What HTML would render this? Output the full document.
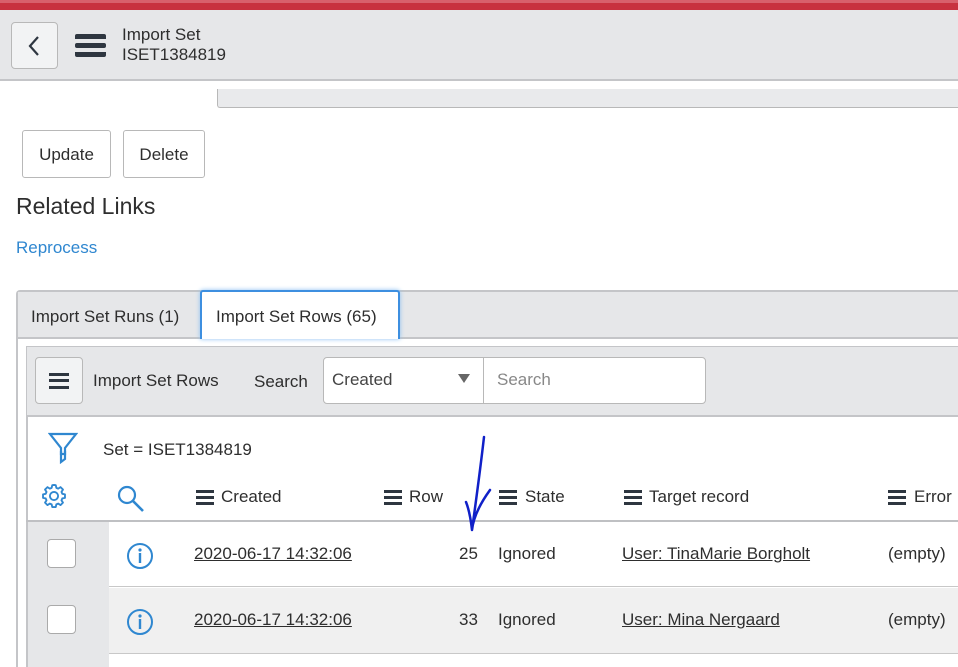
<!DOCTYPE html>
<html><head><style>
*{margin:0;padding:0;box-sizing:border-box}
body{width:958px;height:667px;overflow:hidden;background:#fff;font-family:"Liberation Sans",sans-serif;color:#2e2e2e;position:relative}
.a{position:absolute}
.hb{position:absolute;width:18px;height:15px;border-top:3px solid #2e3640;border-bottom:3px solid #2e3640}
.hb:after{content:"";position:absolute;left:0;right:0;top:3px;height:3px;background:#2e3640}
.btn{position:absolute;border:1px solid #b8b8b8;border-radius:3px;background:#fff;font-size:17px;text-align:center;line-height:47px;color:#2e2e2e}
.th{position:absolute;top:487px;font-size:17px;color:#2e2e2e}
.td{position:absolute;font-size:17px}
.u{text-decoration:underline}
.cb{position:absolute;left:47px;width:29px;height:29px;border:1px solid #aaa;border-radius:4px;background:#fff}
</style></head><body>
<div class="a" style="left:0;top:0;width:958px;height:3px;background:#d8606c"></div>
<div class="a" style="left:0;top:3px;width:958px;height:7px;background:#c8313f"></div>
<div class="a" style="left:0;top:10px;width:958px;height:71px;background:#e6e7e9;border-bottom:2px solid #c4c5c8"></div>
<div class="a" style="left:11px;top:22px;width:47px;height:47px;border:1px solid #b8b8b8;border-radius:4px;background:#f2f3f4"></div>
<svg class="a" style="left:25px;top:34px" width="20" height="24"><path d="M13 3 L5 12 L13 21" fill="none" stroke="#2e3640" stroke-width="2.2"/></svg>
<div class="a" style="left:75px;top:34px;width:31px;height:23px;border-top:5px solid #2e3640;border-bottom:5px solid #2e3640;border-radius:2px"></div>
<div class="a" style="left:75px;top:43px;width:31px;height:5px;background:#2e3640;border-radius:2px"></div>
<div class="a" style="left:122px;top:25px;font-size:17px;color:#2e2e2e">Import Set</div>
<div class="a" style="left:122px;top:45px;font-size:17px;color:#2e2e2e">ISET1384819</div>
<div class="a" style="left:217px;top:89px;width:741px;height:19px;background:#e9eaec;border-left:1px solid #b8b8b8;border-bottom:1px solid #b8b8b8;border-radius:0 0 0 3px"></div>
<div class="btn" style="left:22px;top:130px;width:89px;height:48px">Update</div>
<div class="btn" style="left:123px;top:130px;width:82px;height:48px">Delete</div>
<div class="a" style="left:16px;top:193px;font-size:23px;color:#2e2e2e">Related Links</div>
<div class="a" style="left:16px;top:238px;font-size:17px;color:#2f87d0">Reprocess</div>
<div class="a" style="left:16px;top:290px;width:942px;height:377px;border-left:2px solid #c4c5c8;border-top:2px solid #c4c5c8;border-radius:4px 0 0 0"></div>
<div class="a" style="left:18px;top:292px;width:940px;height:47px;background:#e6e7e9;border-bottom:2px solid #c4c5c8"></div>
<div class="a" style="left:31px;top:307px;font-size:17px">Import Set Runs (1)</div>
<div class="a" style="left:200px;top:290px;width:200px;height:49px;background:#fff;border:2px solid #3d8fe0;border-bottom:none;border-radius:3px 3px 0 0;box-shadow:0 0 5px #8cc0f2"></div>
<div class="a" style="left:216px;top:307px;font-size:17px">Import Set Rows (65)</div>
<div class="a" style="left:26px;top:346px;width:932px;height:71px;background:#e6e7e9;border:1px solid #c4c5c8;border-bottom:2px solid #c4c5c8;border-right:none"></div>
<div class="a" style="left:35px;top:357px;width:48px;height:47px;border:1px solid #b8b8b8;border-radius:4px;background:#f2f3f4"></div>
<div class="a" style="left:49px;top:373px;width:20px;height:16px;border-top:3px solid #2e3640;border-bottom:3px solid #2e3640"></div>
<div class="a" style="left:49px;top:379px;width:20px;height:3px;background:#2e3640"></div>
<div class="a" style="left:93px;top:371px;font-size:17px">Import Set Rows</div>
<div class="a" style="left:254px;top:372px;font-size:17px">Search</div>
<div class="a" style="left:323px;top:357px;width:161px;height:47px;background:#fff;border:1px solid #b8b8b8;border-radius:4px 0 0 4px"></div>
<div class="a" style="left:332px;top:370px;font-size:17px;color:#444">Created</div>
<div class="a" style="left:458px;top:374px;width:0;height:0;border-left:6px solid transparent;border-right:6px solid transparent;border-top:9px solid #666"></div>
<div class="a" style="left:483px;top:357px;width:223px;height:47px;background:#fff;border:1px solid #b8b8b8;border-radius:0 4px 4px 0"></div>
<div class="a" style="left:497px;top:370px;font-size:17px;color:#888">Search</div>
<div class="a" style="left:26px;top:417px;width:932px;height:250px;border-left:2px solid #c4c5c8"></div>
<svg class="a" style="left:48px;top:432px" width="30" height="32"><path d="M2 2 H28 L17 16 V22 H13 V16 Z" fill="none" stroke="#2f87d0" stroke-width="2.2"/><path d="M13 19 V30 L17 27 V19" fill="none" stroke="#2f87d0" stroke-width="2.2"/></svg>
<div class="a" style="left:103px;top:440px;font-size:17px">Set = ISET1384819</div>
<svg class="a" style="left:40px;top:482px" width="28" height="28" viewBox="0 0 24 24"><path d="M12 2.5l1.5.2.5 2.3 1.6.7 2-1.3 2.1 2.1-1.3 2 .7 1.6 2.3.5v3l-2.3.5-.7 1.6 1.3 2-2.1 2.1-2-1.3-1.6.7-.5 2.3h-3l-.5-2.3-1.6-.7-2 1.3-2.1-2.1 1.3-2-.7-1.6-2.3-.5v-3l2.3-.5.7-1.6-1.3-2 2.1-2.1 2 1.3 1.6-.7.5-2.3z" fill="none" stroke="#2f87d0" stroke-width="1.6" stroke-linejoin="round"/><circle cx="12" cy="12" r="3.5" fill="none" stroke="#2f87d0" stroke-width="1.6"/></svg>
<svg class="a" style="left:116px;top:484px" width="30" height="30"><circle cx="11" cy="11" r="8" fill="none" stroke="#2f87d0" stroke-width="2.2"/><path d="M17 17 L27 27" stroke="#2f87d0" stroke-width="2.6"/></svg>
<div class="hb" style="left:196px;top:490px"></div><div class="th" style="left:221px">Created</div>
<div class="hb" style="left:384px;top:490px"></div><div class="th" style="left:409px">Row</div>
<div class="hb" style="left:499px;top:490px"></div><div class="th" style="left:525px">State</div>
<div class="hb" style="left:624px;top:490px"></div><div class="th" style="left:649px">Target record</div>
<div class="hb" style="left:888px;top:490px"></div><div class="th" style="left:914px">Error</div>
<div class="a" style="left:26px;top:520px;width:932px;height:2px;background:#bfc0c3"></div>
<div class="a" style="left:28px;top:522px;width:930px;height:65px;background:#fff;border-bottom:1px solid #c8c8c8"></div>
<div class="a" style="left:28px;top:588px;width:930px;height:66px;background:#f0f0f0;border-bottom:1px solid #c8c8c8"></div>
<div class="a" style="left:28px;top:655px;width:930px;height:12px;background:#fff"></div>
<div class="a" style="left:28px;top:522px;width:81px;height:145px;background:#e6e7e9"></div>
<div class="cb" style="top:539px"></div><div class="cb" style="top:605px"></div>
<svg class="a" style="left:126px;top:541px" width="30" height="30"><circle cx="14" cy="15" r="12" fill="none" stroke="#2f87d0" stroke-width="2"/><circle cx="14" cy="9" r="1.6" fill="#2f87d0"/><rect x="12.8" y="12" width="2.4" height="10" fill="#2f87d0"/></svg>
<svg class="a" style="left:126px;top:607px" width="30" height="30"><circle cx="14" cy="15" r="12" fill="none" stroke="#2f87d0" stroke-width="2"/><circle cx="14" cy="9" r="1.6" fill="#2f87d0"/><rect x="12.8" y="12" width="2.4" height="10" fill="#2f87d0"/></svg>
<div class="td u" style="left:194px;top:544px">2020-06-17 14:32:06</div>
<div class="td" style="left:459px;top:544px">25</div>
<div class="td" style="left:498px;top:544px">Ignored</div>
<div class="td u" style="left:622px;top:544px">User: TinaMarie Borgholt</div>
<div class="td" style="left:888px;top:544px">(empty)</div>
<div class="td u" style="left:194px;top:610px">2020-06-17 14:32:06</div>
<div class="td" style="left:459px;top:610px">33</div>
<div class="td" style="left:498px;top:610px">Ignored</div>
<div class="td u" style="left:622px;top:610px">User: Mina Nergaard</div>
<div class="td" style="left:888px;top:610px">(empty)</div>
<svg class="a" style="left:460px;top:432px" width="40" height="102"><path d="M24 5 Q20 40 12 98 M12 98 Q14 80 30 58 M12 98 Q10 80 6 70" fill="none" stroke="#1020c8" stroke-width="2.5" stroke-linecap="round"/></svg>
</body></html>
